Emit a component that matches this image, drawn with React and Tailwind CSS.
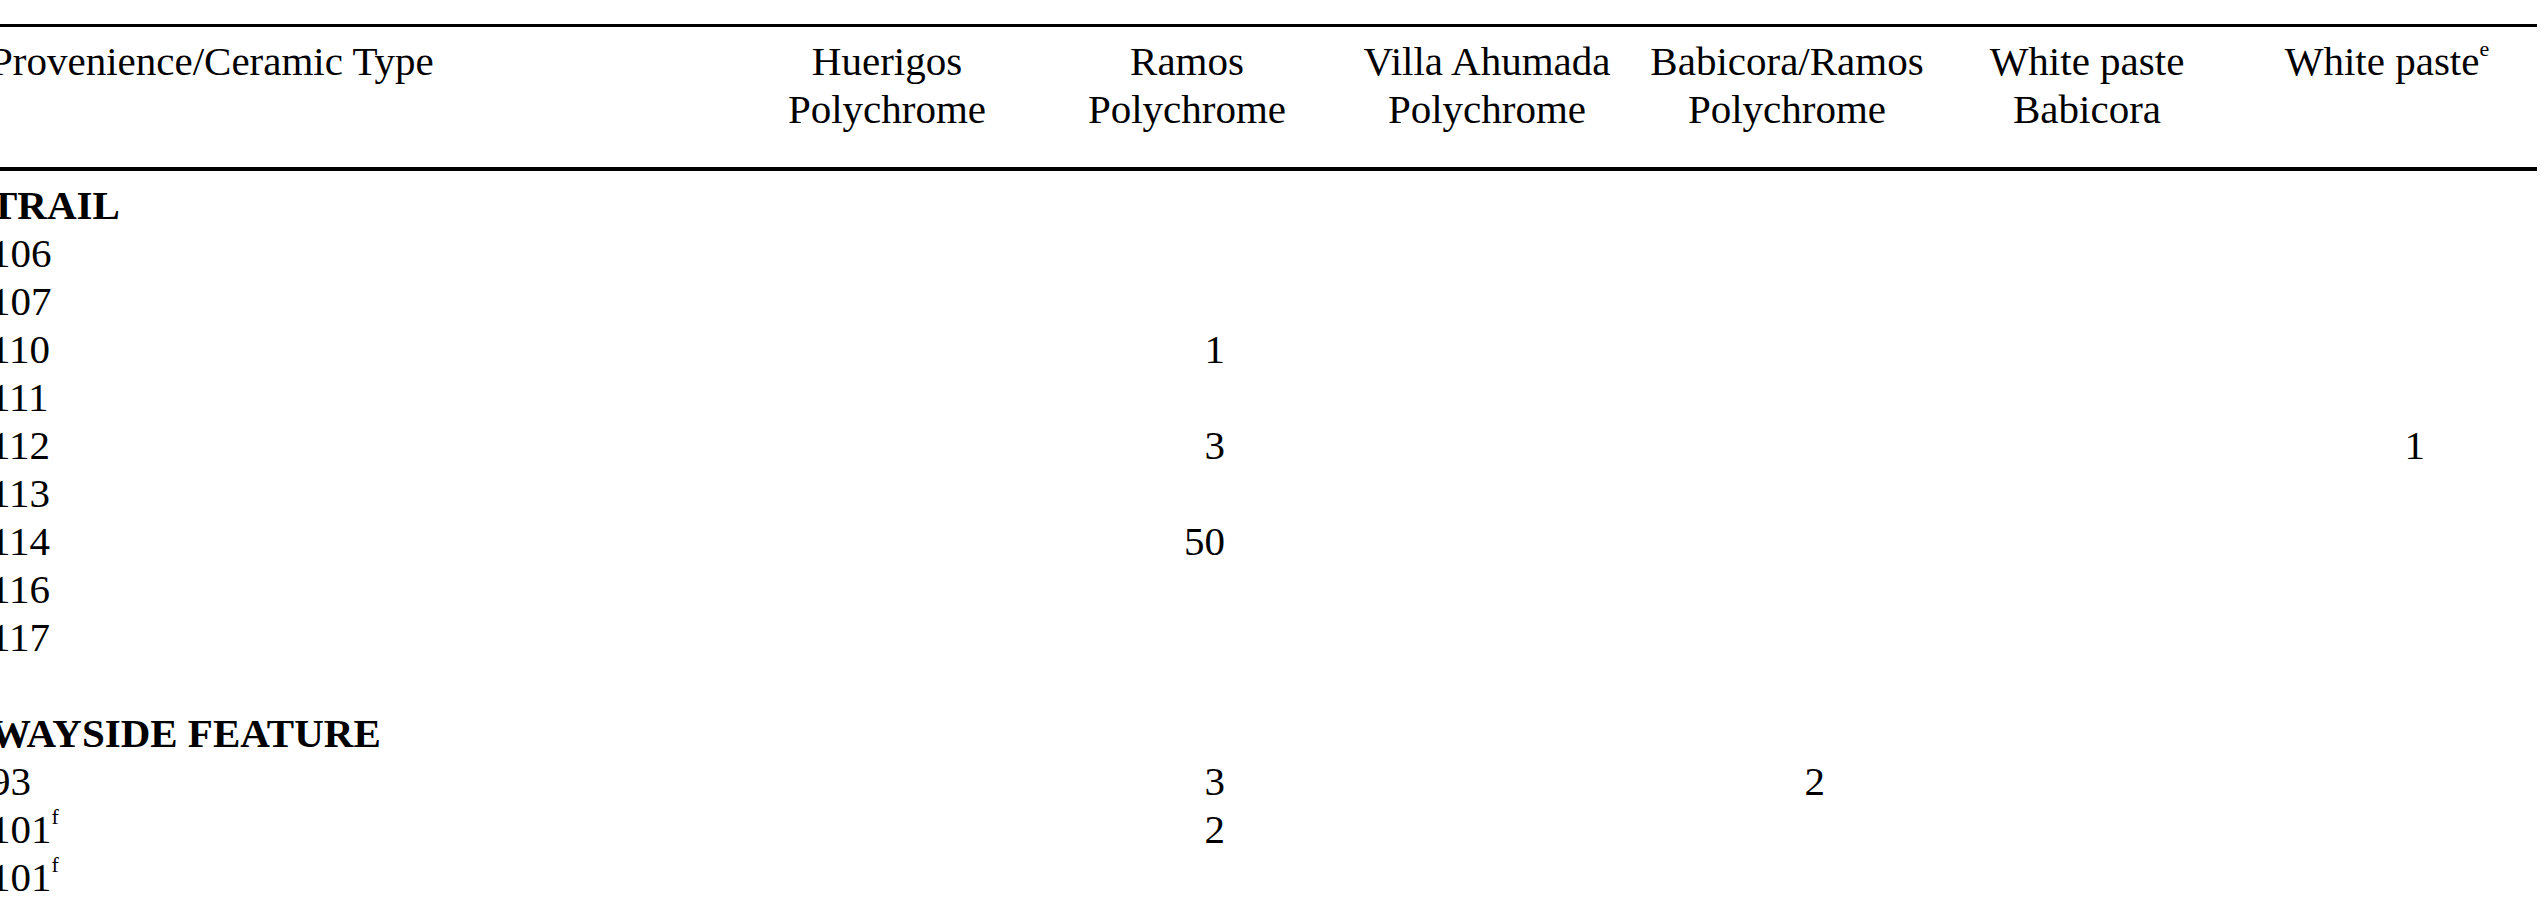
const columns = [
    ["Huerigos", "Polychrome"],
    ["Ramos", "Polychrome"],
    ["Villa Ahumada", "Polychrome"],
    ["Babicora/Ramos", "Polychrome"],
    ["White paste", "Babicora"],
    ["White paste", null, "e"],
];

const groups = [
    {
        name: "TRAIL",
        rows: [
            { id: "106", values: [] },
            { id: "107", values: [] },
            { id: "110", values: [null, "1"] },
            { id: "111", values: [] },
            { id: "112", values: [null, "3", null, null, null, "1"] },
            { id: "113", values: [] },
            { id: "114", values: [null, "50"] },
            { id: "116", values: [] },
            { id: "117", values: [] },
        ],
    },
    {
        name: "WAYSIDE FEATURE",
        rows: [
            { id: "93", values: [null, "3", null, "2"] },
            { id: "101", sup: "f", values: [null, "2"] },
            { id: "101", sup: "f", values: [] },
        ],
    },
];

const Sup = ({ children }) => (
    <span className="text-[22px] leading-none align-[19px]">{children}</span>
);

const Row = ({ label, sup, values = [], bold }) => (
    <div className="grid grid-cols-[747px_repeat(6,300px)] h-[48px]">
        <div className={bold ? "font-bold" : ""}>
            {label}
            {sup && <Sup>{sup}</Sup>}
        </div>
        {columns.map((_, i) => (
            <div key={i} className="text-right pr-[112px]">
                {values[i] || ""}
            </div>
        ))}
    </div>
);

const App = () => {
    return (
        <div className="w-full min-h-screen bg-white text-black overflow-hidden pt-[24px] font-['Liberation_Serif','Times_New_Roman',serif] text-[41px] leading-[48px]">
            <div className="-ml-[10px] w-[2547px]">
                <div className="grid grid-cols-[747px_repeat(6,300px)] border-t-[3px] border-b-4 border-black pt-[10px] pb-[34px]">
                    <div>Provenience/Ceramic Type</div>
                    {columns.map(([a, b, sup], i) => (
                        <div key={i} className="text-center">
                            {a}
                            {sup && <Sup>{sup}</Sup>}
                            {b && (
                                <>
                                    <br />
                                    {b}
                                </>
                            )}
                        </div>
                    ))}
                </div>
                <div className="pt-[10px]">
                    {groups.map((g, gi) => (
                        <div key={g.name}>
                            {gi > 0 && <div className="h-[48px]" />}
                            <Row label={g.name} bold />
                            {g.rows.map((r, ri) => (
                                <Row key={ri} label={r.id} sup={r.sup} values={r.values} />
                            ))}
                        </div>
                    ))}
                </div>
            </div>
        </div>
    );
};

export default App;
